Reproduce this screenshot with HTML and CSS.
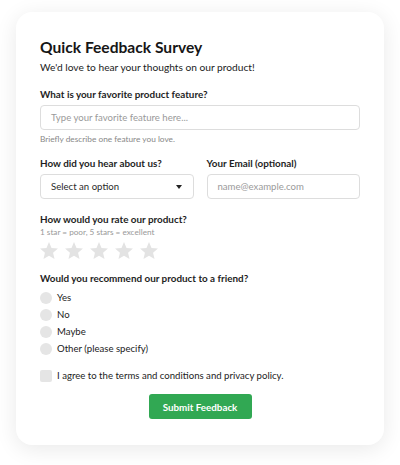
FILE: index.html
```html
<!DOCTYPE html>
<html lang="en">
<head>
    <meta charset="UTF-8">
    <meta name="viewport" content="width=device-width, initial-scale=1.0">
    <title>Quick Feedback Survey</title>
    <link rel="stylesheet" href="styles.css">
</head>
<body>
    <div class="card">
        <h1 class="title">Quick Feedback Survey</h1>
        <p class="subtitle">We'd love to hear your thoughts on our product!</p>

        <div class="group">
            <label class="label">What is your favorite product feature?</label>
            <div class="field placeholder">Type your favorite feature here...</div>
            <p class="help">Briefly describe one feature you love.</p>
        </div>

        <div class="group row">
            <div class="col">
                <label class="label">How did you hear about us?</label>
                <div class="field select">
                    <span>Select an option</span>
                    <span class="caret"></span>
                </div>
            </div>
            <div class="col">
                <label class="label">Your Email (optional)</label>
                <div class="field placeholder">name@example.com</div>
            </div>
        </div>

        <div class="group rating">
            <label class="label tight">How would you rate our product?</label>
            <p class="hint">1 star = poor, 5 stars = excellent</p>
            <div class="stars">
                <svg viewBox="2 2 20 19"><path d="M12 17.27L18.18 21l-1.64-7.03L22 9.24l-7.19-.61L12 2 9.19 8.63 2 9.24l5.46 4.73L5.82 21z"/></svg>
                <svg viewBox="2 2 20 19"><path d="M12 17.27L18.18 21l-1.64-7.03L22 9.24l-7.19-.61L12 2 9.19 8.63 2 9.24l5.46 4.73L5.82 21z"/></svg>
                <svg viewBox="2 2 20 19"><path d="M12 17.27L18.18 21l-1.64-7.03L22 9.24l-7.19-.61L12 2 9.19 8.63 2 9.24l5.46 4.73L5.82 21z"/></svg>
                <svg viewBox="2 2 20 19"><path d="M12 17.27L18.18 21l-1.64-7.03L22 9.24l-7.19-.61L12 2 9.19 8.63 2 9.24l5.46 4.73L5.82 21z"/></svg>
                <svg viewBox="2 2 20 19"><path d="M12 17.27L18.18 21l-1.64-7.03L22 9.24l-7.19-.61L12 2 9.19 8.63 2 9.24l5.46 4.73L5.82 21z"/></svg>
            </div>
        </div>

        <div class="group">
            <label class="label">Would you recommend our product to a friend?</label>
            <div class="options">
                <div class="option"><span class="radio"></span>Yes</div>
                <div class="option"><span class="radio"></span>No</div>
                <div class="option"><span class="radio"></span>Maybe</div>
                <div class="option"><span class="radio"></span>Other (please specify)</div>
            </div>
        </div>

        <div class="option agree"><span class="checkbox"></span>I agree to the terms and conditions and privacy policy.</div>

        <div class="actions">
            <button class="submit">Submit Feedback</button>
        </div>
    </div>
</body>
</html>
```

FILE: styles.css
```css
* {
    margin: 0;
    padding: 0;
    box-sizing: border-box;
}

body {
    font-family: Lato, 'Open Sans', Arial, sans-serif;
    color: #333;
    background: #fff;
    padding: 12px 16px 20px;
}

.card {
    background: #fff;
    border-radius: 16px;
    box-shadow: 0 4px 22px rgba(0, 0, 0, 0.09);
    padding: 24px 24px 26px;
}

.title {
    font-size: 15.6px;
    line-height: 22px;
    font-weight: 700;
    color: #161616;
}

.subtitle {
    font-size: 10.2px;
    line-height: 16px;
    margin-top: 1px;
    color: #222;
}

.group {
    margin-top: 12px;
}

.group.rating {
    margin-top: 14px;
}

.label {
    display: block;
    font-size: 9.9px;
    line-height: 14px;
    font-weight: 700;
    color: #1e1e1e;
    margin-bottom: 4px;
}

.label.tight {
    line-height: 13px;
    margin-bottom: 0;
}

.field {
    height: 25px;
    border: 1px solid #ddd;
    border-radius: 4px;
    padding: 0 10px;
    display: flex;
    align-items: center;
    font-size: 9.6px;
    color: #2a2a2a;
}

.placeholder {
    color: #9a9a9a;
}

.select {
    justify-content: space-between;
    padding-right: 11px;
}

.caret {
    width: 0;
    height: 0;
    border-left: 3.5px solid transparent;
    border-right: 3.5px solid transparent;
    border-top: 4px solid #222;
}

.help {
    font-size: 8.3px;
    line-height: 12px;
    color: #888;
    margin-top: 3px;
}

.row {
    display: grid;
    grid-template-columns: 1fr 1fr;
    gap: 13px;
    margin-top: 11px;
}

.hint {
    font-size: 8.2px;
    line-height: 12px;
    color: #999;
}

.stars {
    display: flex;
    gap: 7px;
    margin: 4px 0 2px;
}

.stars svg {
    width: 18px;
    height: 17px;
    fill: #e3e3e3;
}

.options {
    margin-top: 3px;
}

.option {
    display: flex;
    align-items: center;
    height: 17px;
    font-size: 9.6px;
    color: #222;
}

.radio {
    width: 12px;
    height: 12px;
    border-radius: 50%;
    background: #e5e5e5;
    margin-right: 5px;
}

.checkbox {
    width: 12px;
    height: 12px;
    border-radius: 2px;
    background: #e5e5e5;
    margin-right: 5px;
}

.agree {
    margin-top: 10px;
}

.actions {
    display: flex;
    justify-content: center;
    margin-top: 10px;
}

.submit {
    font-family: inherit;
    font-size: 9.8px;
    font-weight: 700;
    color: #fff;
    background: #31a853;
    border: none;
    border-radius: 3px;
    width: 103px;
    height: 25px;
    cursor: pointer;
}
```
